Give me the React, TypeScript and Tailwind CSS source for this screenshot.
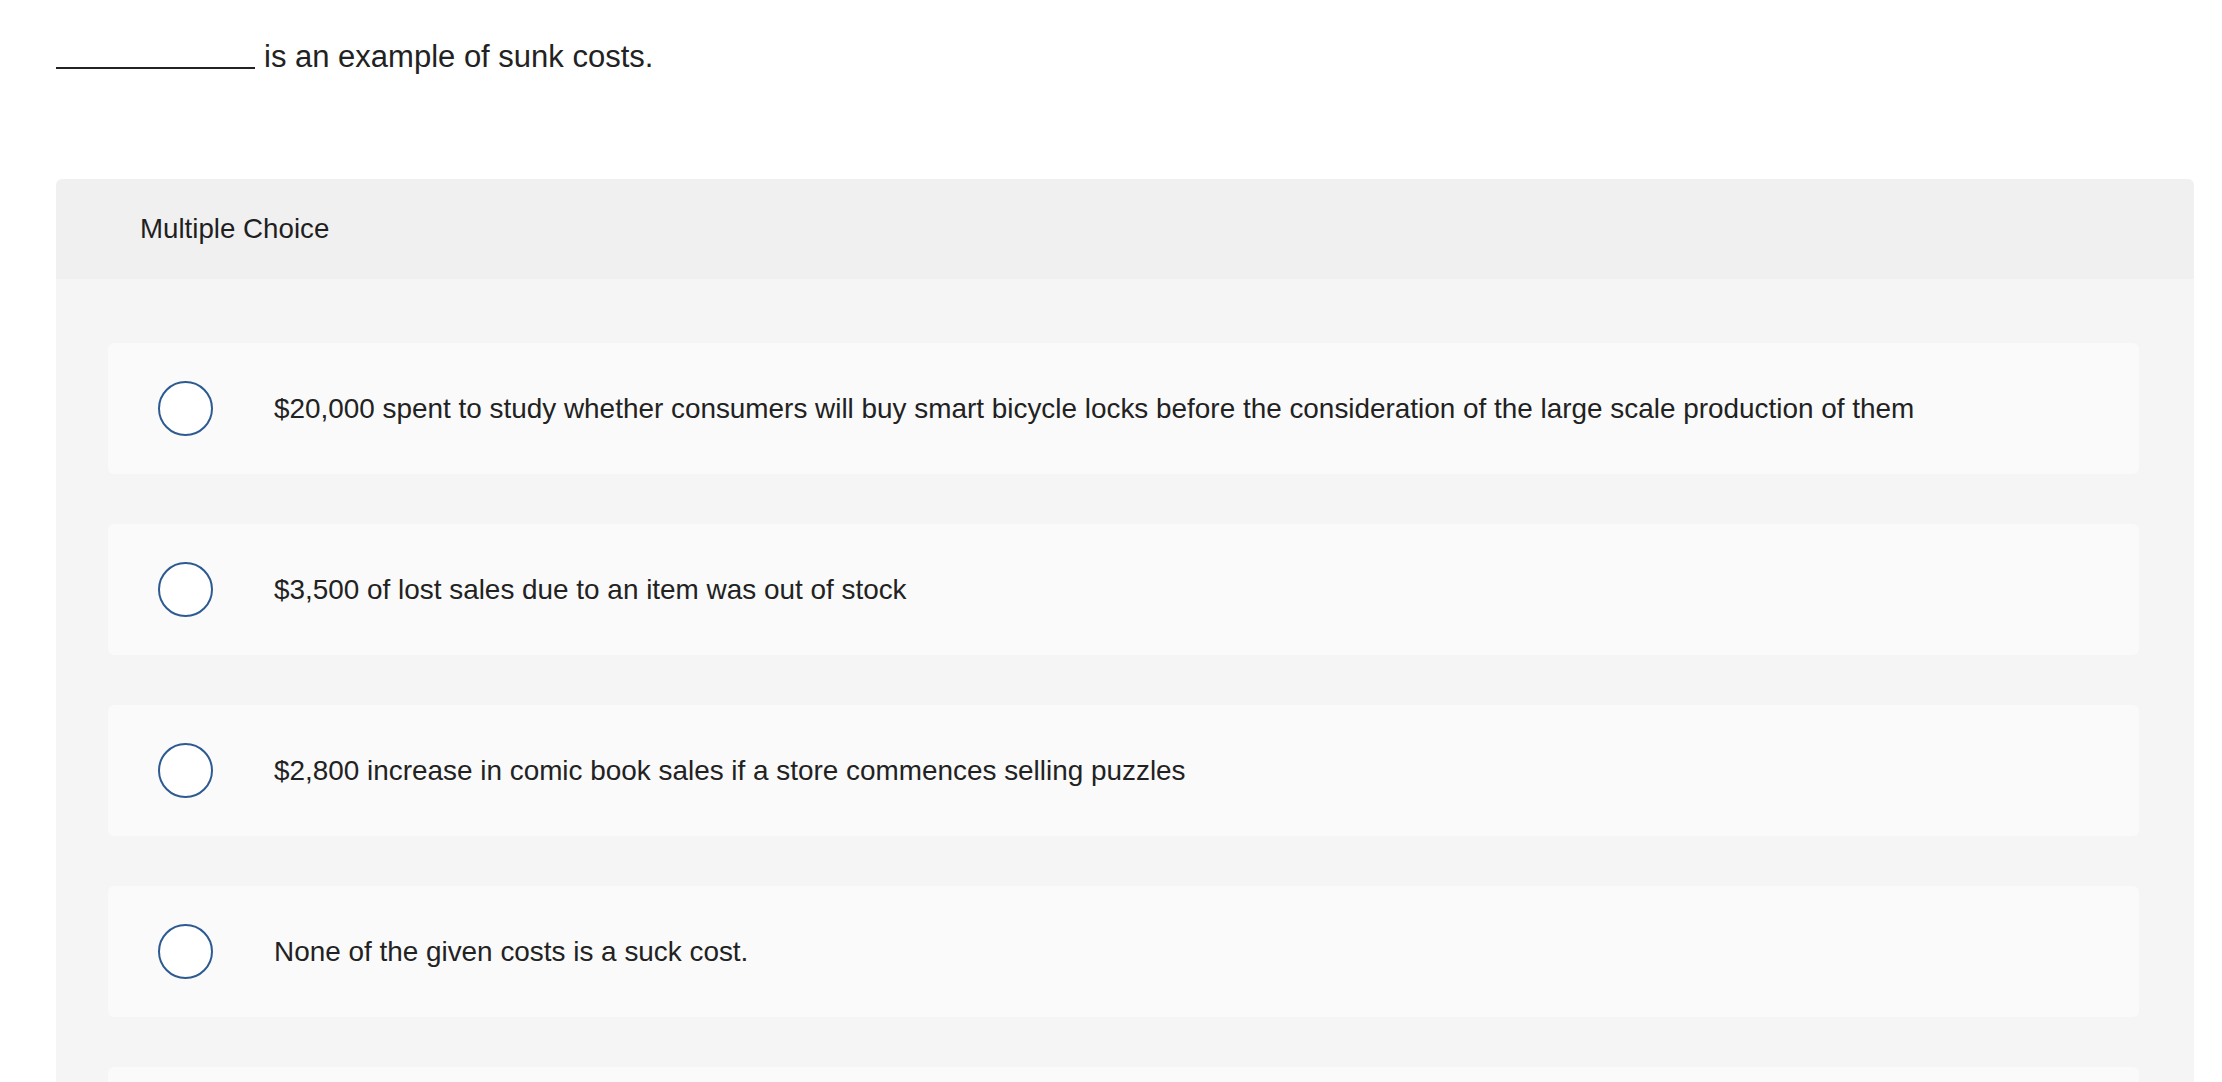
import React from "react";

const options = [
  "$20,000 spent to study whether consumers will buy smart bicycle locks before the consideration of the large scale production of them",
  "$3,500 of lost sales due to an item was out of stock",
  "$2,800 increase in comic book sales if a store commences selling puzzles",
  "None of the given costs is a suck cost.",
  "",
];

export default function App() {
  return (
    <div className="min-h-screen bg-white text-[#222222]" style={{ fontFamily: '"Liberation Sans", Arial, sans-serif' }}>
      <div className="pl-[56px] pt-[39px] flex items-end text-[31px] leading-[36px]">
        <span className="inline-block w-[199px] border-b-2 border-[#222222] mb-[6px]"></span>
        <span className="ml-[9px]">is an example of sunk costs.</span>
      </div>
      <div className="ml-[56px] mr-[28px] mt-[104px] rounded-t-[6px] overflow-hidden">
        <div className="h-[100px] bg-[#f0f0f0] flex items-center pl-[84px] text-[27.7px] text-[#1f1f1f]">
          Multiple Choice
        </div>
        <div className="bg-[#f5f5f5] pl-[52px] pr-[55px] pt-[64px] flex flex-col gap-[50px] pb-[40px]">
          {options.map((o, i) => (
            <div key={i} className="h-[131px] bg-[#fafafa] rounded-[6px] flex items-center pl-[50px]">
              <div className="w-[55px] h-[55px] rounded-full border-2 border-[#2c5a91] bg-white shrink-0"></div>
              <div className="ml-[61px] text-[27.9px] text-[#222222] whitespace-nowrap">{o}</div>
            </div>
          ))}
        </div>
      </div>
    </div>
  );
}
